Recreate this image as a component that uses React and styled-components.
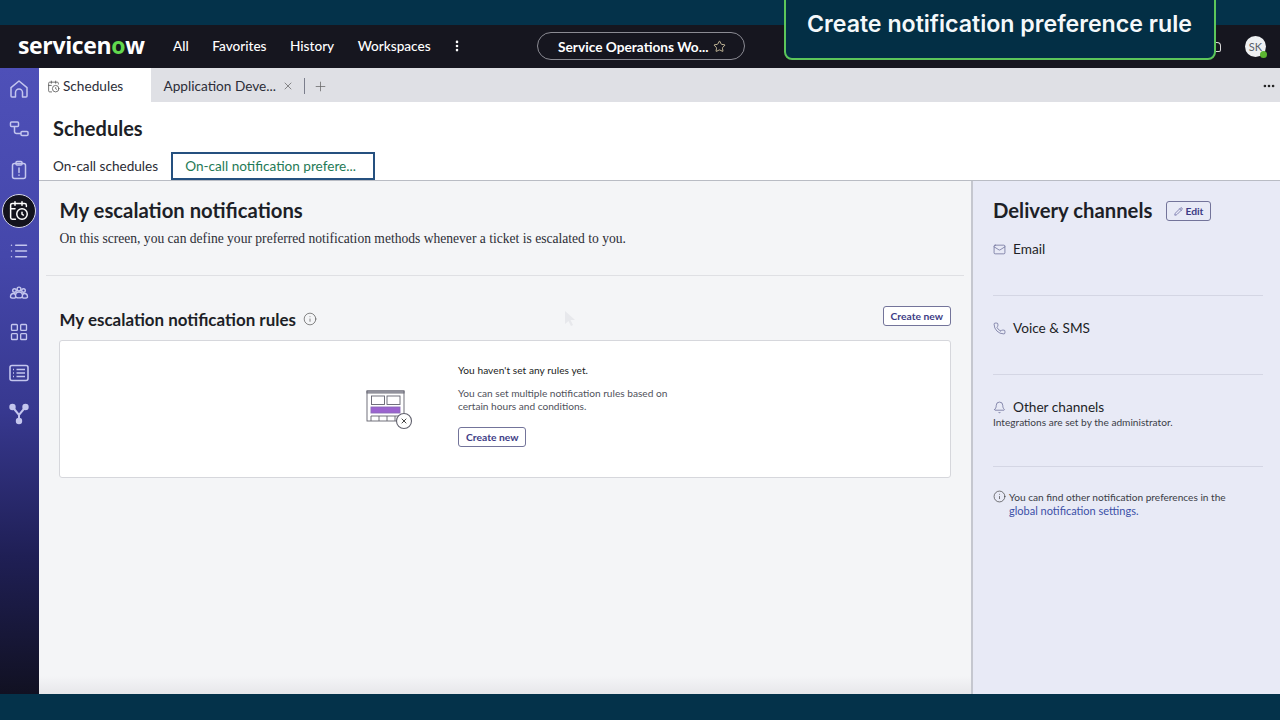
import React from 'react'
import styled, { createGlobalStyle } from 'styled-components'
import {
  CalendarClock, List, LayoutGrid, Mail, Phone, Bell, Info, Pencil, Star, X, Plus, MoreHorizontal, MoreVertical,
} from 'lucide-react'

const GlobalStyle = createGlobalStyle`
  html, body { margin: 0; padding: 0; height: 100%; overflow: hidden; }
  body { font-family: Lato, "Liberation Sans", sans-serif; background: #04304a; }
  * { box-sizing: border-box; }
`

const Page = styled.div`
  position: relative;
  width: 1280px;
  height: 720px;
  display: flex;
  flex-direction: column;
  padding: 25px 0 26px;
  background: #04324a;
  overflow: hidden;
`

const TopBar = styled.header`
  height: 43px;
  flex: none;
  display: flex;
  align-items: center;
  background: #16161f;
  color: #fff;
  padding-left: 18px;
`

const Logo = styled.div`
  width: 127px;
  font-family: "Open Sans", sans-serif;
  font-size: 23px;
  font-weight: 700;
  letter-spacing: -0.35px;
  line-height: 1;
  margin-top: -3px;
  white-space: nowrap;
  span { color: #62d84e; }
`

const NavLinks = styled.nav`
  display: flex;
  align-items: center;
  gap: 23.5px;
  margin-left: 28px;
  margin-top: -1px;
  font-size: 13.6px;
  font-weight: 500;
  svg { display: block; margin-left: -4px; }
`

const Pill = styled.div`
  margin-left: 73px;
  margin-top: -1px;
  width: 208px;
  height: 28px;
  border: 1px solid #8b8b93;
  border-radius: 14px;
  display: flex;
  align-items: center;
  padding-left: 20px;
  gap: 5px;
  font-size: 13.7px;
  font-weight: 700;
  white-space: nowrap;
  svg { color: #e8d9b0; }
`

const Avatar = styled.div`
  position: absolute;
  left: 1245px;
  top: 36px;
  width: 21px;
  height: 21px;
  border-radius: 50%;
  background: #eef0f2;
  color: #5a5f68;
  font-size: 11px;
  display: flex;
  align-items: center;
  justify-content: center;
  &::after {
    content: "";
    position: absolute;
    right: -1px;
    bottom: -1px;
    width: 7px;
    height: 7px;
    border-radius: 50%;
    background: #5cb531;
  }
`

const Callout = styled.div`
  position: absolute;
  left: 784px;
  top: -10px;
  width: 432px;
  height: 70px;
  background: #032f45;
  border: 2.5px solid #5cc65a;
  border-radius: 8px;
  color: #f4f8fa;
  font-family: Inter, sans-serif;
  font-size: 23.15px;
  font-weight: 600;
  padding-left: 21px;
  padding-top: 18px;
  white-space: nowrap;
`

const BellStub = styled.div`
  position: absolute;
  left: 1216px;
  top: 42px;
  width: 5px;
  height: 10px;
  border: 1px solid #d9d9d9;
  border-left: none;
  border-radius: 0 4px 2px 0;
`

const GhostCursor = styled.svg`
  position: absolute;
  left: 564px;
  top: 310px;
  opacity: 0.5;
`

const Body = styled.div`
  flex: 1;
  display: flex;
  min-height: 0;
`

const Rail = styled.aside`
  width: 39px;
  flex: none;
  display: flex;
  flex-direction: column;
  align-items: center;
  padding: 0.5px 2px 0 0;
  background: linear-gradient(180deg, #4e50b8 0%, #4547ab 30%, #37388f 55%, #1f1f55 78%, #111122 100%);
  color: #c4c6ee;
`

const RailItem = styled.div`
  height: 40.6px;
  flex: none;
  display: flex;
  align-items: center;
  justify-content: center;
`

const ActiveIcon = styled.div`
  width: 34px;
  height: 34px;
  border-radius: 50%;
  background: #13131d;
  border: 1px solid #d4d4e8;
  color: #fff;
  display: flex;
  align-items: center;
  justify-content: center;
`

const Main = styled.main`
  flex: 1;
  min-width: 0;
  display: flex;
  flex-direction: column;
  background: #f4f5f7;
`

const TabStrip = styled.div`
  height: 34px;
  flex: none;
  display: flex;
  align-items: center;
  background: #dfe0e5;
  color: #2c2e38;
  font-size: 13.65px;
  padding-top: 2px;
`

const ActiveTab = styled.div`
  width: 112px;
  height: 34px;
  margin-top: -2px;
  padding-top: 2px;
  background: #fff;
  display: flex;
  align-items: center;
  padding-left: 8px;
  gap: 3px;
  svg { color: #555; }
`

const Tab = styled.div`
  display: flex;
  align-items: center;
  margin-left: 12.5px;
  white-space: nowrap;
  svg { margin-left: 6px; color: #666; }
`

const TabDivider = styled.div`
  width: 1px;
  height: 16px;
  background: #7b7e8c;
  margin-left: 10px;
`

const AddTab = styled.div`
  display: flex;
  margin-left: 8px;
  color: #666;
`

const TabMore = styled.div`
  margin-left: auto;
  margin-right: 4px;
  display: flex;
  color: #222;
`

const PageHead = styled.div`
  height: 79px;
  flex: none;
  background: #fff;
  border-bottom: 1px solid #b9bcc4;
  padding-left: 14px;
`

const PageTitle = styled.h1`
  margin: 0;
  padding-top: 14px;
  font-size: 20px;
  line-height: 25px;
  font-weight: 700;
  color: #1d1f27;
`

const SubTabs = styled.div`
  display: flex;
  align-items: center;
  margin-top: 11px;
  font-size: 13.6px;
  color: #2a2c34;
`

const SubTabActive = styled.div`
  width: 204px;
  height: 28px;
  margin-left: 13px;
  border: 2px solid #25507f;
  display: flex;
  align-items: center;
  padding-left: 12px;
  color: #1f7a56;
  white-space: nowrap;
`

const Columns = styled.div`
  flex: 1;
  display: flex;
  min-height: 0;
  background: linear-gradient(180deg, transparent 96.5%, #e7e7ea 100%);
`

const Content = styled.section`
  width: 932px;
  flex: none;
  padding: 0 7px;
`

const Intro = styled.div`
  height: 95px;
  padding: 16px 13.5px 0;
  border-bottom: 1px solid #dfe0e4;
`

const Heading = styled.h2`
  margin: 0;
  font-size: 20.3px;
  line-height: 26px;
  font-weight: 700;
  color: #1d1f27;
`

const Lead = styled.p`
  margin: 7px 0 0;
  font-family: "Liberation Serif", serif;
  font-size: 13.57px;
  line-height: 18px;
  color: #2c2e36;
`

const RulesHead = styled.div`
  display: flex;
  align-items: center;
  justify-content: space-between;
  margin: 30px 13px 0 13.5px;
  height: 20px;
`

const RulesTitle = styled.h3`
  margin: 0;
  display: flex;
  align-items: center;
  gap: 7px;
  font-size: 16.95px;
  font-weight: 700;
  color: #1d1f27;
  position: relative;
  top: 3px;
  svg { color: #555; }
`

const OutlineButton = styled.button`
  font-family: inherit;
  font-size: 10.3px;
  font-weight: 700;
  color: #3d3c85;
  background: ${p => p.$bg || '#fff'};
  border: 1px solid #73749a;
  border-radius: 3px;
  height: 20px;
  padding: 0 ${p => p.$pad || 7}px;
  display: inline-flex;
  align-items: center;
  gap: 2px;
  white-space: nowrap;
`

const EditButton = styled(OutlineButton)`
  margin-top: 2px;
  margin-left: 1px;
`

const EmptyCard = styled.div`
  margin: 14px 13px 0 13px;
  height: 138px;
  background: #fff;
  border: 1px solid #d6d7dc;
  border-radius: 3px;
  display: flex;
  align-items: flex-start;
  padding-left: 306px;
`

const Illustration = styled.svg`
  margin-top: 49px;
  flex: none;
`

const EmptyText = styled.div`
  margin-left: 44px;
  padding-top: 23px;
  font-size: 10.15px;
  line-height: 13px;
  color: #50525c;
`

const EmptyTitle = styled.div`
  color: #1a1c22;
  font-weight: 400;
  margin-bottom: 10px;
  letter-spacing: 0.06px;
`

const EmptyBody = styled.div`
  margin-bottom: 14px;
`

const Side = styled.aside`
  flex: 1;
  background: #e8eaf6;
  border-left: 2px solid #c5c7cf;
  padding: 16px 17px 0 20px;
  color: #1d1f27;
`

const SideHead = styled.div`
  display: flex;
  align-items: center;
  gap: 13px;
`

const Channel = styled.div`
  height: ${p => p.$h || 79}px;
  padding-top: ${p => p.$top || 23}px;
  border-bottom: 1px solid #d4d6e4;
`

const ChannelName = styled.div`
  display: flex;
  align-items: center;
  gap: 7px;
  font-size: 13.65px;
  line-height: 18px;
  svg { color: #5f6290; flex: none; }
`

const ChannelNote = styled.div`
  font-size: 10.15px;
  line-height: 12px;
  color: #3b3d47;
`

const Hint = styled.div`
  display: flex;
  gap: 3px;
  margin-top: 23px;
  font-size: 10.15px;
  line-height: 14px;
  color: #3b3d47;
  svg { flex: none; color: #333; }
  a { color: #3b50a8; text-decoration: none; font-size: 11px; }
`

const HomeIcon = () => (
  <svg width="20" height="20" viewBox="0 0 20 20" fill="none" stroke="currentColor" strokeWidth="1.5" strokeLinejoin="round">
    <path d="M2 8.600 10 2l8 6.600V17a1 1 0 0 1-1 1h-3.500v-4.500a3.500 3.500 0 0 0-7 0V18H3a1 1 0 0 1-1-1z" />
  </svg>
)

const FlowIcon = () => (
  <svg width="20" height="20" viewBox="0 0 20 20" fill="none" stroke="currentColor" strokeWidth="1.5" strokeLinejoin="round">
    <rect x="1.500" y="3" width="8" height="4.500" rx="1" />
    <rect x="12" y="12.500" width="7" height="4" rx="1" />
    <path d="M5.500 7.500V13a2 2 0 0 0 2 1.500H12" />
  </svg>
)

const ClipboardAlertIcon = () => (
  <svg width="20" height="20" viewBox="0 0 20 20" fill="none" stroke="currentColor" strokeWidth="1.5" strokeLinecap="round">
    <rect x="3.500" y="3.500" width="13" height="15" rx="2" />
    <rect x="7" y="1.500" width="6" height="3.500" rx="1" />
    <path d="M10 8v4.500M10 15v.2" />
  </svg>
)

const TeamIcon = () => (
  <svg width="20" height="20" viewBox="0 -1.500 20 20" fill="none" stroke="currentColor" strokeWidth="1.400">
    <circle cx="10" cy="5.500" r="1.900" />
    <circle cx="5.500" cy="7" r="1.800" />
    <circle cx="14.500" cy="7" r="1.800" />
    <path d="M1.500 13.500c0-2.500 1.500-3.500 3-3.500s2.500 1 2.500 3.500c0 1.500-5.500 1.500-5.500 0zM13 13.500c0-2.500 1-3.500 2.500-3.500s3 1 3 3.500c0 1.500-5.500 1.500-5.500 0z" />
    <path d="M6.500 12.500C6.500 10 8 8.500 10 8.500s3.500 1.500 3.500 4c0 2.500-7 2.500-7 0z" fill="#3f41a0" />
  </svg>
)

const FormIcon = () => (
  <svg width="20" height="18" viewBox="0 0 20 18" fill="none" stroke="currentColor" strokeWidth="1.6">
    <rect x="1" y="1.500" width="18" height="15" rx="2" />
    <path d="M4 5.500h1M7.500 5.500H16M4 9h1M7.500 9H16M4 12.500h1M7.500 12.500H16" />
  </svg>
)

const BranchIcon = () => (
  <svg width="20" height="22" viewBox="0 0 20 22" fill="none" stroke="currentColor" strokeWidth="2">
    <circle cx="3.500" cy="4" r="2.200" fill="currentColor" />
    <circle cx="16.500" cy="4" r="2.200" fill="currentColor" />
    <circle cx="10" cy="18" r="2.200" fill="currentColor" />
    <path d="M3.500 4 10 12l6.500-8M10 12v6" />
  </svg>
)

const EmptyArt = () => (
  <Illustration width="48" height="40" viewBox="0 0 48 40" fill="none" stroke="#62626e" strokeWidth="0.9">
    <rect x="1" y="1" width="37" height="30" fill="#fff" />
    <rect x="1" y="1" width="37" height="2" fill="#b9b9c4" />
    <rect x="5.500" y="6" width="13" height="8.500" />
    <rect x="21" y="6" width="13" height="8.500" />
    <rect x="5" y="17" width="29" height="6" fill="#9b63cf" stroke="#8a6ab8" />
    <path d="M5 31v-5h29v5M13 26v5M21 26v5M29 26v5" />
    <circle cx="38" cy="31" r="7.500" fill="#fff" strokeWidth="1.100" />
    <path d="M35.700 28.700 40.300 33.300M40.300 28.700 35.700 33.300" stroke="#333" />
  </Illustration>
)

function App() {
  return (
    <Page>
      <GlobalStyle />
      <TopBar>
        <Logo>servicen<span>o</span>w</Logo>
        <NavLinks>
          <span>All</span>
          <span>Favorites</span>
          <span>History</span>
          <span>Workspaces</span>
          <MoreVertical size={14} strokeWidth={2.5} />
        </NavLinks>
        <Pill>
          Service Operations Wo...
          <Star size={13} strokeWidth={1.5} />
        </Pill>
      </TopBar>
      <BellStub />
      <Avatar>SK</Avatar>
      <Callout>Create notification preference rule</Callout>
      <Body>
        <Rail>
          <RailItem><HomeIcon /></RailItem>
          <RailItem><FlowIcon /></RailItem>
          <RailItem><ClipboardAlertIcon /></RailItem>
          <RailItem><ActiveIcon><CalendarClock size={21} strokeWidth={1.7} /></ActiveIcon></RailItem>
          <RailItem><List size={20} strokeWidth={1.8} /></RailItem>
          <RailItem><TeamIcon /></RailItem>
          <RailItem><LayoutGrid size={20} strokeWidth={1.6} /></RailItem>
          <RailItem><FormIcon /></RailItem>
          <RailItem><BranchIcon /></RailItem>
        </Rail>
        <Main>
          <TabStrip>
            <ActiveTab><CalendarClock size={13} strokeWidth={1.5} />Schedules</ActiveTab>
            <Tab>Application Deve...<X size={12} strokeWidth={1.5} /></Tab>
            <TabDivider />
            <AddTab><Plus size={15} strokeWidth={1.2} /></AddTab>
            <TabMore><MoreHorizontal size={14} strokeWidth={2.5} /></TabMore>
          </TabStrip>
          <PageHead>
            <PageTitle>Schedules</PageTitle>
            <SubTabs>
              <span>On-call schedules</span>
              <SubTabActive>On-call notification prefere...</SubTabActive>
            </SubTabs>
          </PageHead>
          <Columns>
            <Content>
              <Intro>
                <Heading>My escalation notifications</Heading>
                <Lead>On this screen, you can define your preferred notification methods whenever a ticket is escalated to you.</Lead>
              </Intro>
              <RulesHead>
                <RulesTitle>My escalation notification rules <Info size={14} strokeWidth={1.2} /></RulesTitle>
                <OutlineButton>Create new</OutlineButton>
              </RulesHead>
              <EmptyCard>
                <EmptyArt />
                <EmptyText>
                  <EmptyTitle>You haven't set any rules yet.</EmptyTitle>
                  <EmptyBody>You can set multiple notification rules based on<br />certain hours and conditions.</EmptyBody>
                  <OutlineButton>Create new</OutlineButton>
                </EmptyText>
              </EmptyCard>
            </Content>
            <Side>
              <SideHead>
                <Heading>Delivery channels</Heading>
                <EditButton $bg="#e8eaf6"><Pencil size={9} strokeWidth={1.5} />Edit</EditButton>
              </SideHead>
              <Channel $h={73} $top={17}>
                <ChannelName><Mail size={13} strokeWidth={1.3} />Email</ChannelName>
              </Channel>
              <Channel>
                <ChannelName><Phone size={13} strokeWidth={1.3} />Voice &amp; SMS</ChannelName>
              </Channel>
              <Channel $h={92}>
                <ChannelName><Bell size={13} strokeWidth={1.3} />Other channels</ChannelName>
                <ChannelNote>Integrations are set by the administrator.</ChannelNote>
              </Channel>
              <Hint>
                <Info size={13} strokeWidth={1.2} />
                <div>You can find other notification preferences in the<br /><a href="#settings">global notification settings.</a></div>
              </Hint>
            </Side>
          </Columns>
        </Main>
      </Body>
      <GhostCursor width="11" height="17" viewBox="0 0 11 17">
        <path d="M1 1v13l3.500-3 2.500 5 2-1-2.500-5H11z" fill="#dcdde2" />
      </GhostCursor>
    </Page>
  )
}

export default App
